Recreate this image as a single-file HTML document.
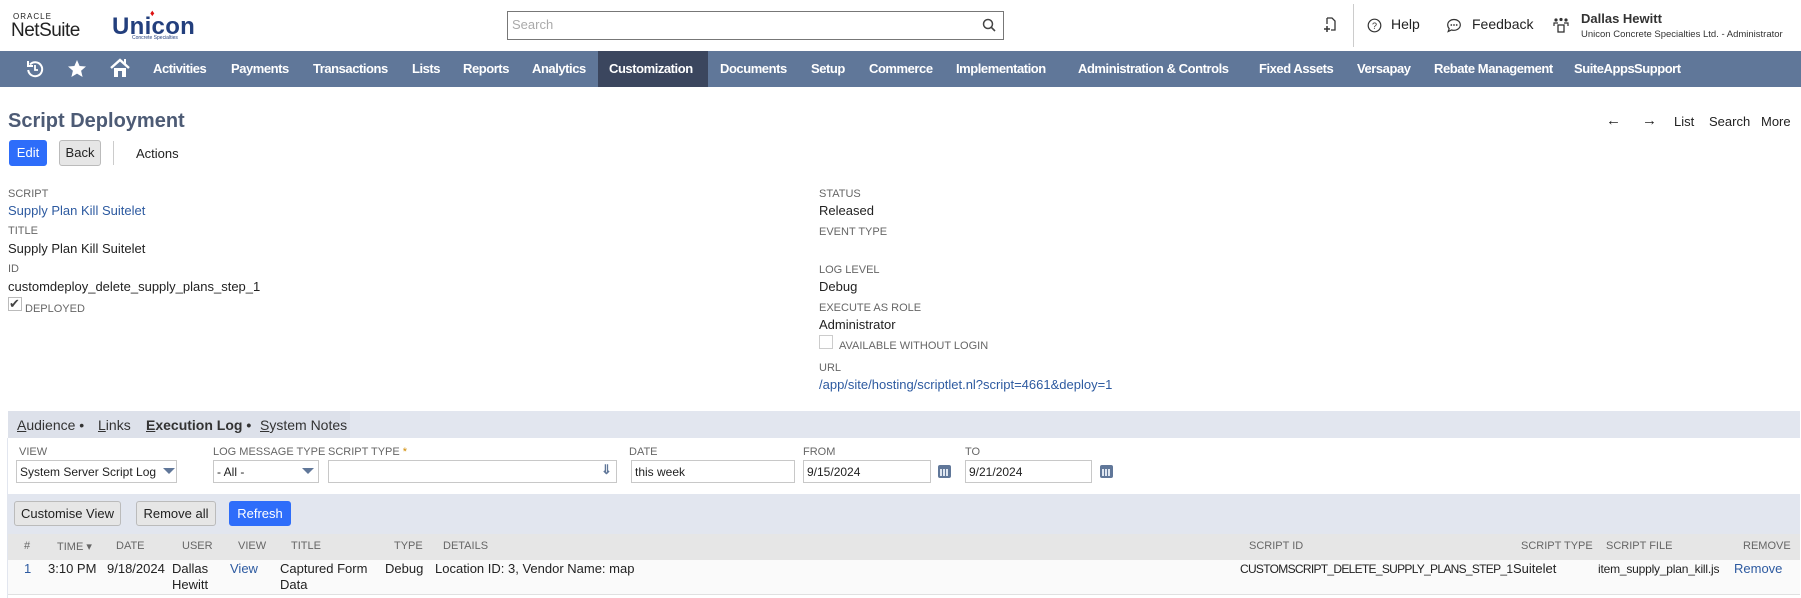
<!DOCTYPE html>
<html><head><meta charset="utf-8"><style>
*{margin:0;padding:0;box-sizing:border-box}
body{width:1801px;height:598px;position:relative;overflow:hidden;background:#fff;font-family:"Liberation Sans",Arial,sans-serif;color:#222;font-size:13px}
.a{position:absolute;white-space:nowrap}
.nav{position:absolute;left:0;top:51px;width:1801px;height:36px;background:#607799}
.nav .a{color:#fff;font-weight:bold;font-size:13px;letter-spacing:-0.45px;top:10px}
.lbl{position:absolute;font-size:11px;color:#666;text-transform:uppercase;white-space:nowrap;line-height:13px}
.val{position:absolute;font-size:13px;color:#222;white-space:nowrap}
.btn{position:absolute;border:1px solid #bbb;background:#e6e6e6;border-radius:3px;font-size:13px;text-align:center;color:#222}
.inp{position:absolute;border:1px solid #c8c8c8;background:#fff;height:23px;font-size:12px;padding:4px 3px;overflow:hidden}
.th{position:absolute;top:540px;font-size:11px;color:#666;white-space:nowrap}
.td{position:absolute;top:561px;font-size:13px;color:#222;white-space:nowrap;line-height:16px}
.lnk{color:#2d5aa0 !important}
.cal{position:absolute;width:13px;height:13px;background:#607799;border-radius:2px;top:465px}
.cal:after{content:"";position:absolute;left:2px;top:4px;width:9px;height:7px;background:repeating-linear-gradient(90deg,#dfe6f0 0 2px,#607799 2px 3px)}
</style></head><body>
<!-- header -->
<div class="a" style="left:13px;top:12px;font-size:8px;letter-spacing:1px;color:#222">ORACLE</div>
<div class="a" style="left:11px;top:20px;font-size:19px;color:#222;letter-spacing:-0.5px">NetSuite</div>
<div class="a" style="left:150px;top:8px;color:#d11;font-size:9px">&#9830;</div>
<div class="a" style="left:112px;top:13px;font-size:24px;font-weight:bold;color:#233f7d;letter-spacing:0.3px">Unicon</div>
<div class="a" style="left:132px;top:35px;font-size:5px;color:#233f7d">Concrete Specialties</div>
<div class="a" style="left:507px;top:11px;width:497px;height:29px;border:1px solid #777;"></div>
<div class="a" style="left:512px;top:17px;font-size:13px;color:#aaa">Search</div>
<svg class="a" style="left:982px;top:18px" width="14" height="14" viewBox="0 0 14 14"><circle cx="6" cy="6" r="4.5" fill="none" stroke="#444" stroke-width="1.5"/><line x1="9.3" y1="9.3" x2="13" y2="13" stroke="#444" stroke-width="1.6"/></svg>
<svg class="a" style="left:1323px;top:17px" width="14" height="16" viewBox="0 0 14 16"><path d="M4 1h5l3 3v9H8M4 1v6" fill="none" stroke="#333" stroke-width="1.3"/><path d="M4 9v6M1 12h6" stroke="#333" stroke-width="1.5"/></svg>
<div class="a" style="left:1353px;top:4px;width:1px;height:43px;background:#ccc"></div>
<svg class="a" style="left:1367px;top:18px" width="15" height="15" viewBox="0 0 15 15"><circle cx="7.5" cy="7.5" r="6.3" fill="none" stroke="#333" stroke-width="1.2"/><text x="7.5" y="11" font-size="9" text-anchor="middle" font-family="Liberation Sans" fill="#333">?</text></svg>
<div class="a" style="left:1391px;top:16px;font-size:14px">Help</div>
<svg class="a" style="left:1446px;top:18px" width="16" height="15" viewBox="0 0 16 15"><path d="M8 1.5c3.6 0 6.3 2.4 6.3 5.4S11.6 12.3 8 12.3c-.9 0-1.7-.1-2.4-.4L2.2 13.5l1-2.8C2.2 9.7 1.7 8.4 1.7 6.9 1.7 3.9 4.4 1.5 8 1.5z" fill="none" stroke="#333" stroke-width="1.2"/><circle cx="5.3" cy="7" r=".9" fill="#333"/><circle cx="8" cy="7" r=".9" fill="#333"/><circle cx="10.7" cy="7" r=".9" fill="#333"/></svg>
<div class="a" style="left:1472px;top:16px;font-size:14px">Feedback</div>
<svg class="a" style="left:1553px;top:17px" width="16" height="16" viewBox="0 0 16 16"><circle cx="3" cy="3" r="1.6" fill="#333"/><circle cx="8" cy="2.5" r="1.6" fill="#333"/><circle cx="13" cy="3" r="1.6" fill="#333"/><rect x="5" y="8" width="6" height="7" fill="none" stroke="#333" stroke-width="1.3"/><path d="M1 9v-3h4M15 9v-3h-4" fill="none" stroke="#333" stroke-width="1.2"/></svg>
<div class="a" style="left:1581px;top:11px;font-size:13px;font-weight:bold;color:#333">Dallas Hewitt</div>
<div class="a" style="left:1581px;top:29px;font-size:9.5px;color:#333">Unicon Concrete Specialties Ltd. - Administrator</div>
<!-- nav -->
<div class="nav">
<svg class="a" style="left:25px;top:8px" width="20" height="20" viewBox="0 0 20 20"><path d="M5 5.5A7 7 0 1 1 3.2 11" fill="none" stroke="#fff" stroke-width="2"/><path d="M3 2v5h5" fill="none" stroke="#fff" stroke-width="2"/><path d="M10 6v5h3" fill="none" stroke="#fff" stroke-width="1.8"/></svg>
<svg class="a" style="left:67px;top:8px" width="20" height="20" viewBox="0 0 20 20"><path d="M10 1l2.6 6 6.4.5-4.9 4.2 1.5 6.3L10 14.6 4.4 18l1.5-6.3L1 7.5l6.4-.5z" fill="#fff"/></svg>
<svg class="a" style="left:109px;top:6px" width="22" height="22" viewBox="0 0 22 22"><path d="M2 11L11 3l9 8" fill="none" stroke="#fff" stroke-width="2.4"/><path d="M5 11v9h12v-9M15 5V2h2v5" fill="#fff"/><rect x="9" y="14" width="4" height="6" fill="#607799"/></svg>
<div class="a" style="left:153px">Activities</div>
<div class="a" style="left:231px">Payments</div>
<div class="a" style="left:313px">Transactions</div>
<div class="a" style="left:412px">Lists</div>
<div class="a" style="left:463px">Reports</div>
<div class="a" style="left:532px">Analytics</div>
<div class="a" style="left:598px;top:0;width:110px;height:36px;background:#3b465e"></div>
<div class="a" style="left:609px">Customization</div>
<div class="a" style="left:720px">Documents</div>
<div class="a" style="left:811px">Setup</div>
<div class="a" style="left:869px">Commerce</div>
<div class="a" style="left:956px">Implementation</div>
<div class="a" style="left:1078px">Administration &amp; Controls</div>
<div class="a" style="left:1259px">Fixed Assets</div>
<div class="a" style="left:1357px">Versapay</div>
<div class="a" style="left:1434px">Rebate Management</div>
<div class="a" style="left:1574px">SuiteApps</div>
<div class="a" style="left:1634px">Support</div>
</div>
<!-- title -->
<div class="a" style="left:8px;top:110px;font-size:20px;font-weight:bold;color:#4d5b75">Script Deployment</div>
<div class="a" style="left:1606px;top:112px;font-size:15px;font-weight:bold">&#8592;</div>
<div class="a" style="left:1642px;top:112px;font-size:15px;font-weight:bold">&#8594;</div>
<div class="a" style="left:1674px;top:114px;font-size:13px">List</div>
<div class="a" style="left:1709px;top:114px;font-size:13px">Search</div>
<div class="a" style="left:1761px;top:114px;font-size:13px">More</div>
<div class="btn" style="left:9px;top:140px;width:38px;height:26px;background:#2e6dfa;border-color:#2e6dfa;color:#fff;line-height:24px">Edit</div>
<div class="btn" style="left:59px;top:140px;width:42px;height:26px;line-height:24px">Back</div>
<div class="a" style="left:113px;top:141px;width:1px;height:24px;background:#ccc"></div>
<div class="a" style="left:136px;top:146px;font-size:13px">Actions</div>
<!-- fields left -->
<div class="lbl" style="left:8px;top:188px">Script</div>
<div class="val lnk" style="left:8px;top:203px">Supply Plan Kill Suitelet</div>
<div class="lbl" style="left:8px;top:225px">Title</div>
<div class="val" style="left:8px;top:241px">Supply Plan Kill Suitelet</div>
<div class="lbl" style="left:8px;top:263px">ID</div>
<div class="val" style="left:8px;top:279px">customdeploy_delete_supply_plans_step_1</div>
<div class="a" style="left:8px;top:297px;width:14px;height:14px;border:1px solid #bbb;font-size:13px;line-height:11px;color:#444">&#10004;</div>
<div class="lbl" style="left:25px;top:303px">Deployed</div>
<!-- fields right -->
<div class="lbl" style="left:819px;top:188px">Status</div>
<div class="val" style="left:819px;top:203px">Released</div>
<div class="lbl" style="left:819px;top:226px">Event Type</div>
<div class="lbl" style="left:819px;top:264px">Log Level</div>
<div class="val" style="left:819px;top:279px">Debug</div>
<div class="lbl" style="left:819px;top:302px">Execute as Role</div>
<div class="val" style="left:819px;top:317px">Administrator</div>
<div class="a" style="left:819px;top:335px;width:14px;height:14px;border:1px solid #ccc"></div>
<div class="lbl" style="left:839px;top:340px">Available without login</div>
<div class="lbl" style="left:819px;top:362px">URL</div>
<div class="val lnk" style="left:819px;top:377px">/app/site/hosting/scriptlet.nl?script=4661&amp;deploy=1</div>
<!-- subtab -->
<div class="a" style="left:8px;top:411px;width:1792px;height:27px;background:#e2e6ef"></div>
<div class="a" style="left:8px;top:411px;width:342px;height:27px;background:#dde1ea"></div>
<div class="a" style="left:17px;top:417px;font-size:14px;color:#333"><u>A</u>udience •</div>
<div class="a" style="left:98px;top:417px;font-size:14px;color:#333"><u>L</u>inks</div>
<div class="a" style="left:146px;top:417px;font-size:14px;font-weight:bold;color:#333"><u>E</u>xecution Log •</div>
<div class="a" style="left:260px;top:417px;font-size:14px;color:#333"><u>S</u>ystem Notes</div>
<div class="a" style="left:7px;top:438px;width:1px;height:160px;background:#e2e6ef"></div>
<div class="lbl" style="left:19px;top:446px">View</div>
<div class="inp" style="left:16px;top:460px;width:161px">System Server Script Log</div>
<div class="a" style="left:163px;top:468px;border:6px solid transparent;border-top:6px solid #607799;border-bottom:0"></div>
<div class="lbl" style="left:213px;top:446px">Log Message Type</div>
<div class="inp" style="left:213px;top:460px;width:106px">- All -</div>
<div class="a" style="left:302px;top:468px;border:6px solid transparent;border-top:6px solid #607799;border-bottom:0"></div>
<div class="lbl" style="left:328px;top:446px">Script Type <span style="color:#d08a00">*</span></div>
<div class="inp" style="left:328px;top:460px;width:289px"></div>
<div class="a" style="left:601px;top:462px;font-size:13px;color:#607799;font-weight:bold">&#8659;</div>
<div class="lbl" style="left:629px;top:446px">Date</div>
<div class="inp" style="left:631px;top:460px;width:164px">this week</div>
<div class="lbl" style="left:803px;top:446px">From</div>
<div class="inp" style="left:803px;top:460px;width:128px">9/15/2024</div>
<div class="cal" style="left:938px"></div>
<div class="lbl" style="left:965px;top:446px">To</div>
<div class="inp" style="left:965px;top:460px;width:127px">9/21/2024</div>
<div class="cal" style="left:1100px"></div>
<div class="a" style="left:8px;top:494px;width:1792px;height:40px;background:#e2e6ef"></div>
<div class="btn" style="left:14px;top:501px;width:107px;height:25px;line-height:23px">Customise View</div>
<div class="btn" style="left:136px;top:501px;width:80px;height:25px;line-height:23px">Remove all</div>
<div class="btn" style="left:229px;top:501px;width:62px;height:25px;line-height:23px;background:#2e6dfa;border-color:#2e6dfa;color:#fff">Refresh</div>
<div class="a" style="left:8px;top:534px;width:1792px;height:26px;background:#e6e6e6"></div>
<div class="a" style="left:8px;top:560px;width:1792px;height:35px;background:#fafafa;border-bottom:1px solid #e0e0e0"></div>
<div class="th" style="left:24px">#</div>
<div class="th" style="left:57px">TIME ▾</div>
<div class="th" style="left:116px">DATE</div>
<div class="th" style="left:182px">USER</div>
<div class="th" style="left:238px">VIEW</div>
<div class="th" style="left:291px">TITLE</div>
<div class="th" style="left:394px">TYPE</div>
<div class="th" style="left:443px">DETAILS</div>
<div class="th" style="left:1249px">SCRIPT ID</div>
<div class="th" style="left:1521px">SCRIPT TYPE</div>
<div class="th" style="left:1606px">SCRIPT FILE</div>
<div class="th" style="left:1743px">REMOVE</div>
<div class="td lnk" style="left:24px">1</div>
<div class="td" style="left:48px">3:10 PM</div>
<div class="td" style="left:107px">9/18/2024</div>
<div class="td" style="left:172px">Dallas<br>Hewitt</div>
<div class="td lnk" style="left:230px">View</div>
<div class="td" style="left:280px">Captured Form<br>Data</div>
<div class="td" style="left:385px">Debug</div>
<div class="td" style="left:435px">Location ID: 3, Vendor Name: map</div>
<div class="td" style="left:1240px;font-size:12px;letter-spacing:-0.7px">CUSTOMSCRIPT_DELETE_SUPPLY_PLANS_STEP_1</div>
<div class="td" style="left:1513px">Suitelet</div>
<div class="td" style="left:1598px;font-size:12px;letter-spacing:-0.2px">item_supply_plan_kill.js</div>
<div class="td lnk" style="left:1734px">Remove</div>
</body></html>
